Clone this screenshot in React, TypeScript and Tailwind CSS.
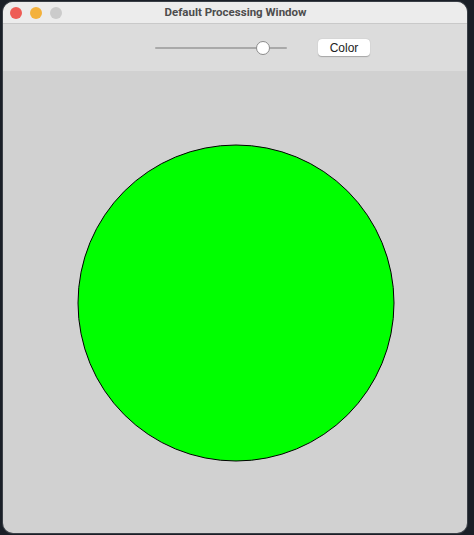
export default function App() {
  return (
    <div className="w-[474px] h-[535px] bg-[#1a1f27] pl-[3px] pr-[7px] pt-[2px] pb-[2px] font-['Liberation_Sans',sans-serif]">
      <div className="w-full h-full rounded-[10px] overflow-hidden flex flex-col bg-[#d1d1d1] shadow-[0_0_0_1px_#3a3f46]">
        {/* title bar */}
        <div className="relative h-[22px] shrink-0 bg-[#ececec] border-b border-[#c9c9c9] flex items-center justify-center">
          <div className="absolute left-[7px] top-[5px] flex gap-[8px]">
            <span className="w-[12px] h-[12px] rounded-full bg-[#ee5c55]" />
            <span className="w-[12px] h-[12px] rounded-full bg-[#f3b13b]" />
            <span className="w-[12px] h-[12px] rounded-full bg-[#cbcbcb]" />
          </div>
          <span className="text-[11.5px] font-bold text-[#4d4d4d] font-['Roboto',sans-serif] pl-[1px]">Default Processing Window</span>
        </div>
        {/* toolbar */}
        <div className="h-[47px] shrink-0 bg-[#dcdcdc] flex items-center pl-[152px]">
          <div className="relative w-[132px] h-[16px] flex items-center">
            <div className="w-full h-[2px] bg-[#a9a9a9] rounded" />
            <span className="absolute left-[101px] top-[1px] w-[14px] h-[14px] rounded-full bg-white border border-[#8c8c8c]" />
          </div>
          <button className="ml-[31px] w-[52px] h-[17px] rounded-[4px] bg-white text-[12px] text-[#222] shadow-[0_0.5px_1px_rgba(0,0,0,0.25)] flex items-center justify-center">
            Color
          </button>
        </div>
        {/* canvas */}
        <div className="flex-1 flex justify-center pt-[73px] pl-[1px]">
          <svg width="318" height="318" viewBox="0 0 318 318">
            <circle cx="159" cy="159" r="158" fill="#00ff00" stroke="#000" strokeWidth="1" />
          </svg>
        </div>
      </div>
    </div>
  );
}
